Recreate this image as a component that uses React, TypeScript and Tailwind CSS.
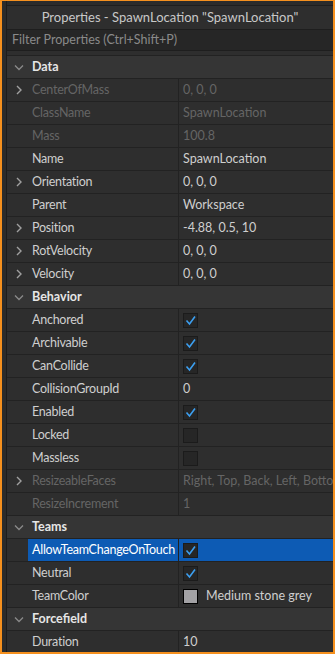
import React from "react";

type Row =
  | { kind: "header"; label: string }
  | {
      kind: "prop";
      name: string;
      value?: string;
      expand?: boolean;
      disabled?: boolean;
      check?: boolean;
      selected?: boolean;
      swatch?: string;
    };

const rows: Row[] = [
  { kind: "header", label: "Data" },
  { kind: "prop", name: "CenterOfMass", value: "0, 0, 0", expand: true, disabled: true },
  { kind: "prop", name: "ClassName", value: "SpawnLocation", disabled: true },
  { kind: "prop", name: "Mass", value: "100.8", disabled: true },
  { kind: "prop", name: "Name", value: "SpawnLocation" },
  { kind: "prop", name: "Orientation", value: "0, 0, 0", expand: true },
  { kind: "prop", name: "Parent", value: "Workspace" },
  { kind: "prop", name: "Position", value: "-4.88, 0.5, 10", expand: true },
  { kind: "prop", name: "RotVelocity", value: "0, 0, 0", expand: true },
  { kind: "prop", name: "Velocity", value: "0, 0, 0", expand: true },
  { kind: "header", label: "Behavior" },
  { kind: "prop", name: "Anchored", check: true },
  { kind: "prop", name: "Archivable", check: true },
  { kind: "prop", name: "CanCollide", check: true },
  { kind: "prop", name: "CollisionGroupId", value: "0" },
  { kind: "prop", name: "Enabled", check: true },
  { kind: "prop", name: "Locked", check: false },
  { kind: "prop", name: "Massless", check: false },
  {
    kind: "prop",
    name: "ResizeableFaces",
    value: "Right, Top, Back, Left, Bottom, Front",
    expand: true,
    disabled: true,
  },
  { kind: "prop", name: "ResizeIncrement", value: "1", disabled: true },
  { kind: "header", label: "Teams" },
  { kind: "prop", name: "AllowTeamChangeOnTouch", check: true, selected: true },
  { kind: "prop", name: "Neutral", check: true },
  { kind: "prop", name: "TeamColor", value: "Medium stone grey", swatch: "#a3a2a5" },
  { kind: "header", label: "Forcefield" },
  { kind: "prop", name: "Duration", value: "10" },
];

const ChevronRight = () => (
  <svg width="8" height="10" viewBox="0 0 8 10" className="shrink-0">
    <path d="M2 1 L6 5 L2 9" fill="none" stroke="#a0a0a0" strokeWidth="1.4" />
  </svg>
);

const ChevronDown = () => (
  <svg width="10" height="7" viewBox="0 0 10 7" className="shrink-0">
    <path d="M1 1.5 L5 5.5 L9 1.5" fill="none" stroke="#8a8a8a" strokeWidth="1.3" />
  </svg>
);

const CheckBox = ({ on }: { on: boolean }) => (
  <div className="w-[15px] h-[15px] shrink-0 bg-[#262626] border border-[#1b1b1b] flex items-center justify-center">
    {on && (
      <svg width="13" height="13" viewBox="0 0 13 13">
        <path d="M2.5 6.5 L5.5 10 L11 2.5" fill="none" stroke="#3c9ff0" strokeWidth="1.6" />
      </svg>
    )}
  </div>
);

const PropRow = ({ row }: { row: Extract<Row, { kind: "prop" }> }) => {
  const nameColor = row.disabled ? "text-[#656565]" : "text-[#cfcfcf]";
  return (
    <div className="flex h-[23px] border-b border-[#222222]">
      <div className="w-[21px] shrink-0 flex items-center pl-[8px]">
        {row.expand && <ChevronRight />}
      </div>
      <div
        className={`w-[150px] shrink-0 flex items-center pl-1 whitespace-nowrap overflow-hidden tracking-[-0.25px] ${
          row.selected ? "bg-[#0d5bb4] text-white" : nameColor
        }`}
      >
        {row.name}
      </div>
      <div
        className={`flex-1 min-w-0 flex items-center gap-2 pl-1 border-l border-[#222222] whitespace-nowrap overflow-hidden ${
          row.selected ? "bg-[#0d5bb4]" : ""
        } ${row.disabled ? "text-[#656565]" : "text-[#cfcfcf]"}`}
      >
        {row.check !== undefined && <CheckBox on={row.check} />}
        {row.swatch && (
          <div
            className="w-[15px] h-[15px] border border-black shrink-0"
            style={{ backgroundColor: row.swatch }}
          />
        )}
        {row.value && <span>{row.value}</span>}
      </div>
    </div>
  );
};

const HeaderRow = ({ label }: { label: string }) => (
  <div className="flex h-[23px] items-center bg-[#353535] border-b border-[#222222]">
    <div className="w-[25px] shrink-0 flex items-center pl-[7px]">
      <ChevronDown />
    </div>
    <span className="font-bold text-[#e6e6e6]">{label}</span>
  </div>
);

export default function App() {
  return (
    <div
      className="w-[335px] h-[654px] overflow-hidden border-t border-l-2 border-r-2 border-b-2 border-[#f5901e] bg-[#2b2b2b] flex text-[12.5px]"
      style={{ fontFamily: "Lato, 'Noto Sans', sans-serif" }}
    >
      <div className="w-[5px] shrink-0 bg-[#2b2b2b] border-r border-[#1c1c1c]" />
      <div className="flex-1 min-w-0 flex flex-col pt-[4px]">
        <div className="h-[24px] shrink-0 bg-[#2e2e2e] border-t border-[#1e1e1e] flex items-center justify-center text-[#c8c8c8] text-[13px]">
          Properties - SpawnLocation "SpawnLocation"
        </div>
        <div className="h-[22px] shrink-0 bg-[#262626] border-y border-[#1e1e1e] flex items-center pl-[5px] text-[#8a8a8a]">
          Filter Properties (Ctrl+Shift+P)
        </div>
        <div className="h-[5px] shrink-0 bg-[#2e2e2e] border-b border-[#222222]" />
        <div className="flex-1 bg-[#2e2e2e] flex flex-col">
          {rows.map((r, i) =>
            r.kind === "header" ? (
              <HeaderRow key={i} label={r.label} />
            ) : (
              <PropRow key={i} row={r} />
            )
          )}
        </div>
      </div>
    </div>
  );
}
